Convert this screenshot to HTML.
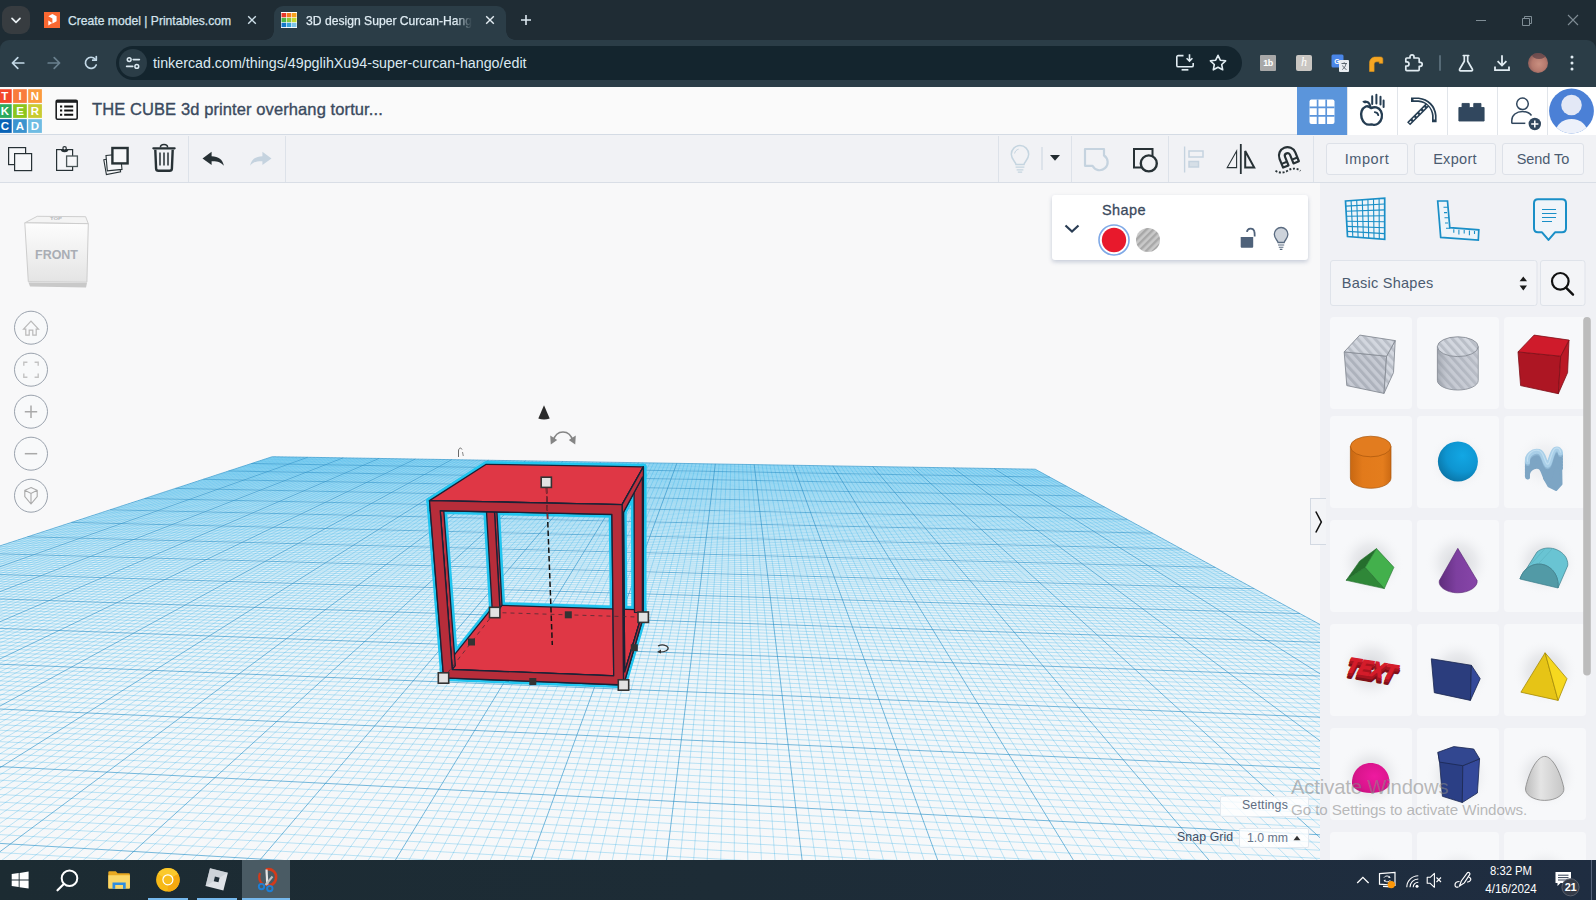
<!DOCTYPE html>
<html lang="en">
<head>
<meta charset="utf-8">
<title>3D design Super Curcan-Hango | Tinkercad</title>
<style>
*{box-sizing:border-box;margin:0;padding:0}
html,body{width:1596px;height:900px;overflow:hidden;background:#f7f8f9;font-family:"Liberation Sans",sans-serif;}
body{position:relative}
.abs{position:absolute}
svg{display:block;overflow:visible}
/* ---------- browser chrome ---------- */
#tabstrip{left:0;top:0;width:1596px;height:60px;background:#1f2c34}
#navbar{left:0;top:40px;width:1596px;height:47px;background:#2b3d47;border-top-left-radius:9px;border-top-right-radius:9px}
#tabsearch{left:2px;top:6px;width:28px;height:28px;border-radius:9px;background:#373c40}
.tabtitle{font-size:12.15px;color:#d3e3ec;white-space:nowrap;letter-spacing:0;-webkit-text-stroke:.25px #d3e3ec}
#tab1t{left:68px;top:13.5px}
#tab2{left:274px;top:6px;width:232px;height:34px;background:#2b3d47;border-radius:9px 9px 0 0}
#tab2:before,#tab2:after{content:"";position:absolute;bottom:0;width:9px;height:9px}
#tab2:before{left:-9px;background:radial-gradient(circle at 0 0,rgba(0,0,0,0) 8.5px,#2b3d47 9px)}
#tab2:after{right:-9px;background:radial-gradient(circle at 100% 0,rgba(0,0,0,0) 8.5px,#2b3d47 9px)}
#tab2t{left:306px;top:13.5px;width:166px;overflow:hidden;color:#e6f0f6;-webkit-mask-image:linear-gradient(90deg,#000 150px,transparent 166px);mask-image:linear-gradient(90deg,#000 150px,transparent 166px)}
#urlpill{left:116px;top:46px;width:1126px;height:34px;border-radius:17px;background:#14252e}
#urlchip{left:119px;top:49px;width:28px;height:28px;border-radius:14px;background:#2b3d47}
#url{left:153px;top:54.5px;font-size:14.28px;color:#dbe9f1;white-space:nowrap}
#url span{color:#dbe9f1}
/* ---------- tinkercad header ---------- */
#tkhead{left:0;top:87px;width:1596px;height:48px;background:#fafafa;border-bottom:1px solid #d4dbe4}
#tktitle{left:92px;top:99.8px;font-size:16.5px;color:#3b4a5e;white-space:nowrap;letter-spacing:.1px;-webkit-text-stroke:.35px #3b4a5e}
#tkbar{left:0;top:135px;width:1596px;height:48px;background:#f1f2f5;border-bottom:1px solid #d9dee6}
.vsep{width:1px;background:#dde2e9}
.btn{height:32px;top:143px;border:1px solid #dde1e8;border-radius:3px;background:#f4f5f8;color:#4b5b70;font-size:14.5px;text-align:center;line-height:30px;letter-spacing:.3px}
.hbtn{top:87px;width:50px;height:48px;border-left:1px solid #e1e5ea;background:#fff}
/* ---------- viewport ---------- */
#viewport{left:0;top:183px;width:1320px;height:677px;background:#f8f8f9;overflow:hidden}
#rightpanel{left:1320px;top:183px;width:276px;height:677px;background:#f0f1f5;overflow:hidden}
.card{width:82px;height:91px;background:#f7f8fa;border-radius:4px}
#shapebox{left:1052px;top:195px;width:256px;height:65px;background:#fff;border-radius:3px;box-shadow:0 2px 4px rgba(60,80,120,.25)}
.navc{left:17px;width:28px;height:28px;border:1px solid #b7b9bc;border-radius:50%;background:#f9f9fa}
/* ---------- taskbar ---------- */
#taskbar{left:0;top:860px;width:1596px;height:40px;background:linear-gradient(90deg,#1c2b32 0%,#1d2c36 45%,#1f2d41 100%)}
.tbtxt{color:#fff;font-size:12px;white-space:nowrap}
</style>
</head>
<body>
<!-- ================= BROWSER CHROME ================= -->
<div id="tabstrip" class="abs"></div>
<div id="navbar" class="abs"></div>
<div id="tabsearch" class="abs"><svg width="28" height="28" viewBox="0 0 28 28"><path d="M10 12.3l4 4 4-4" fill="none" stroke="#e8eef2" stroke-width="1.7" stroke-linecap="round" stroke-linejoin="round"/></svg></div>
<!-- tab 1 -->
<svg class="abs" style="left:44px;top:12px" width="16" height="16" viewBox="0 0 16 16"><rect width="16" height="16" fill="#fa6831"/><path d="M4.3 4.2L8.4 2l4.2 2.2v5L8.4 11.4V6.4z" fill="#fff"/><path d="M4.3 8.6v5l4-2.5z" fill="#fff"/></svg>
<div id="tab1t" class="abs tabtitle">Create model | Printables.com</div>
<svg class="abs" style="left:246px;top:14px" width="12" height="12" viewBox="0 0 12 12"><path d="M2.2 2.2l7.6 7.6M9.8 2.2l-7.6 7.6" stroke="#cfe0ea" stroke-width="1.4" fill="none"/></svg>
<!-- tab 2 (active) -->
<div id="tab2" class="abs"></div>
<svg class="abs" style="left:281px;top:12px" width="16" height="16" viewBox="0 0 16 16">
<rect x="0" y="0" width="16" height="16" fill="#fff"/>
<rect x="0.5" y="1" width="4.6" height="4.3" fill="#e8392c"/><rect x="5.7" y="1" width="4.6" height="4.3" fill="#f47b20"/><rect x="10.9" y="1" width="4.6" height="4.3" fill="#f9a11b"/>
<rect x="0.5" y="5.9" width="4.6" height="4.3" fill="#4cb648"/><rect x="5.7" y="5.9" width="4.6" height="4.3" fill="#8cc63f"/><rect x="10.9" y="5.9" width="4.6" height="4.3" fill="#c8d92c"/>
<rect x="0.5" y="10.8" width="4.6" height="4.3" fill="#1477c9"/><rect x="5.7" y="10.8" width="4.6" height="4.3" fill="#39a3dc"/><rect x="10.9" y="10.8" width="4.6" height="4.3" fill="#7dc4e8"/>
</svg>
<div id="tab2t" class="abs tabtitle">3D design Super Curcan-Hango | Tinkercad</div>
<svg class="abs" style="left:484px;top:14px" width="12" height="12" viewBox="0 0 12 12"><path d="M2.2 2.2l7.6 7.6M9.8 2.2l-7.6 7.6" stroke="#e3edf3" stroke-width="1.4" fill="none"/></svg>
<svg class="abs" style="left:519px;top:13px" width="14" height="14" viewBox="0 0 14 14"><path d="M7 2v10M2 7h10" stroke="#dce8ef" stroke-width="1.6" fill="none"/></svg>
<!-- window controls -->
<svg class="abs" style="left:1470px;top:10px" width="120" height="20" viewBox="0 0 120 20"><path d="M6 10.5h10" stroke="#7f8d95" stroke-width="1"/><path d="M52.5 8.5h7v7h-7zM54.5 8.5v-2h7v7h-2" fill="none" stroke="#7f8d95" stroke-width="1"/><path d="M98 5l10 10M108 5l-10 10" stroke="#7f8d95" stroke-width="1.1"/></svg>
<!-- nav buttons -->
<svg class="abs" style="left:8px;top:53px" width="100" height="20" viewBox="0 0 100 20">
<path d="M15.8 10H4.6M9.8 4.6L4.4 10l5.4 5.4" fill="none" stroke="#c3d9e7" stroke-width="1.7" stroke-linecap="round" stroke-linejoin="round"/>
<path d="M40.2 10h11.2M46.2 4.6l5.4 5.4-5.4 5.4" fill="none" stroke="#6a808e" stroke-width="1.7" stroke-linecap="round" stroke-linejoin="round"/>
<path d="M87.3 6.2A5.6 5.6 0 1 0 88.2 12" fill="none" stroke="#c3d9e7" stroke-width="1.7" stroke-linecap="round"/><path d="M88.3 3.6v3.6h-3.6" fill="none" stroke="#c3d9e7" stroke-width="1.7" stroke-linecap="round" stroke-linejoin="round"/>
</svg>
<!-- url pill -->
<div id="urlpill" class="abs"></div>
<div id="urlchip" class="abs"><svg width="28" height="28" viewBox="0 0 28 28"><circle cx="10.2" cy="10.6" r="1.9" fill="none" stroke="#dbe9f1" stroke-width="1.5"/><path d="M14.2 10.6h6.2" stroke="#dbe9f1" stroke-width="1.6" stroke-linecap="round"/><circle cx="17.8" cy="17.4" r="1.9" fill="none" stroke="#dbe9f1" stroke-width="1.5"/><path d="M7.6 17.4h6.2" stroke="#dbe9f1" stroke-width="1.6" stroke-linecap="round"/></svg></div>
<div id="url" class="abs">tinkercad.com<span>/things/49pglihXu94-super-curcan-hango/edit</span></div>
<!-- right side of url pill -->
<svg class="abs" style="left:1174px;top:52px" width="60" height="22" viewBox="0 0 60 22">
<path d="M9.5 3.6H4.2c-.8 0-1.4.6-1.400 1.400v8.400c0 .8.600 1.400 1.400 1.400h13.600c.8 0 1.400-.6 1.400-1.400V11" fill="none" stroke="#e1ecf2" stroke-width="1.6"/><path d="M7.6 17.8h6.800" stroke="#e1ecf2" stroke-width="1.7"/><path d="M15.500 2.300v6.600M12.600 6.200l2.900 2.900 2.900-2.900" fill="none" stroke="#e1ecf2" stroke-width="1.6"/>
<path d="M44 3.300l2.300 4.900 5.300.6-3.900 3.700 1 5.300-4.700-2.600-4.700 2.600 1-5.300-3.900-3.700 5.300-.6z" fill="none" stroke="#e1ecf2" stroke-width="1.6" stroke-linejoin="round"/>
</svg>
<!-- extensions -->
<div class="abs" style="left:1260px;top:55px;width:16px;height:16px;background:#a8a8a8;border-radius:1px;color:#fff;font-size:9px;font-weight:bold;line-height:16px;text-align:center;letter-spacing:-.5px">1b</div>
<div class="abs" style="left:1296px;top:55px;width:16px;height:16px;background:#c9c6c2;border-radius:2px;color:#fff;font-size:12px;font-style:italic;font-family:'Liberation Serif',serif;line-height:15px;text-align:center">h</div>
<svg class="abs" style="left:1331px;top:54px" width="19" height="19" viewBox="0 0 19 19"><rect x="0.5" y="0.5" width="12" height="13" rx="1.5" fill="#4a86e8"/><rect x="8" y="6" width="10" height="12" rx="1" fill="#e9edf2"/><path d="M10.500 9.500h5.500M13.200 8.300v1.200M11.300 15.500c2-1.500 3.400-3.500 3.700-6M11.600 11.500c.8 1.700 2 3 3.900 4" stroke="#5c6670" stroke-width="1" fill="none"/><text x="3.200" y="9.800" font-family="Liberation Sans, sans-serif" font-size="7" font-weight="bold" fill="#fff">G</text></svg>
<svg class="abs" style="left:1367px;top:54px" width="18" height="19" viewBox="0 0 18 19"><path d="M2.500 17.500V9.500c0-4 2.300-6.500 6-6.500h5c1.500 0 2.300.8 2.300 2.300v4h-3.600V7.800h-2.500c-1.700 0-2.600.9-2.600 2.600v7.100z" fill="#f5a623" stroke="#e2951a" stroke-width=".6"/></svg>
<svg class="abs" style="left:1402px;top:52px" width="22" height="22" viewBox="0 0 22 22"><path d="M8 4.800a2 2 0 0 1 4 0V6h4.200c.6 0 1 .4 1 1v3.300h1a2 2 0 0 1 0 4h-1V17.600c0 .6-.4 1-1 1H4.800c-.6 0-1-.4-1-1V14h1.100a2.100 2.100 0 0 0 0-4.200H3.800V7c0-.6.4-1 1-1H8z" fill="none" stroke="#e1ecf2" stroke-width="1.7" stroke-linejoin="round"/></svg>
<div class="abs" style="left:1439px;top:55px;width:2px;height:16px;background:#566a76;border-radius:1px"></div>
<svg class="abs" style="left:1455px;top:52px" width="22" height="22" viewBox="0 0 22 22"><path d="M8.300 3.500h5.400M9.300 3.700v5.500L4.600 17.300c-.4.800.1 1.500.9 1.500h11c.8 0 1.300-.7.900-1.500L12.700 9.200V3.700" fill="none" stroke="#e1ecf2" stroke-width="1.700" stroke-linejoin="round" stroke-linecap="round"/></svg>
<svg class="abs" style="left:1491px;top:52px" width="22" height="22" viewBox="0 0 22 22"><path d="M11 3.200v10M6.600 9.200l4.400 4.400 4.400-4.400" fill="none" stroke="#e1ecf2" stroke-width="1.800"/><path d="M4 14.500v3.700h14v-3.700" fill="none" stroke="#e1ecf2" stroke-width="1.800"/></svg>
<div class="abs" style="left:1528px;top:53px;width:20px;height:20px;border-radius:50%;background:radial-gradient(circle at 55% 55%,#c98f80 0,#b67a6e 45%,#8a5b58 75%,#6b4a52 100%);overflow:hidden"><div class="abs" style="left:4px;top:-3px;width:14px;height:9px;border-radius:50%;background:#5a4046;opacity:.7"></div></div>
<svg class="abs" style="left:1568px;top:53px" width="8" height="20" viewBox="0 0 8 20"><circle cx="4" cy="4" r="1.500" fill="#e1ecf2"/><circle cx="4" cy="10" r="1.500" fill="#e1ecf2"/><circle cx="4" cy="16" r="1.500" fill="#e1ecf2"/></svg>
<!-- ================= TINKERCAD HEADER ================= -->
<div id="tkhead" class="abs"></div>
<svg class="abs" style="left:0;top:87px" width="44" height="48" viewBox="0 0 44 48" font-family="Liberation Sans, sans-serif" font-weight="bold" font-size="11.500" fill="#fff" text-anchor="middle">
<rect x="-2" y="2.200" width="13.700" height="13.700" fill="#f4472a"/><rect x="13.100" y="2.200" width="13.700" height="13.700" fill="#f97c3c"/><rect x="28.200" y="2.200" width="13.700" height="13.700" fill="#fb9a3d"/>
<rect x="-2" y="17.200" width="13.700" height="13.700" fill="#2daa5d"/><rect x="13.100" y="17.200" width="13.700" height="13.700" fill="#8cc51d"/><rect x="28.200" y="17.200" width="13.700" height="13.700" fill="#c9cb32"/>
<rect x="-2" y="32.200" width="13.700" height="13.700" fill="#0a63b6"/><rect x="13.100" y="32.200" width="13.700" height="13.700" fill="#3b93cf"/><rect x="28.200" y="32.200" width="13.700" height="13.700" fill="#6fbce3"/>
<text x="4.800" y="13.300">T</text><text x="20" y="13.300">I</text><text x="35" y="13.300">N</text>
<text x="4.800" y="28.300">K</text><text x="20" y="28.300">E</text><text x="35" y="28.300">R</text>
<text x="4.800" y="43.300">C</text><text x="20" y="43.300">A</text><text x="35" y="43.300">D</text>
</svg>
<svg class="abs" style="left:54px;top:98px" width="26" height="24" viewBox="0 0 26 24"><rect x="2.200" y="2.400" width="21" height="18.800" rx="1.200" fill="#fdfdfd" stroke="#1d1f21" stroke-width="1.600"/><path d="M2.200 3.600h21" stroke="#1d1f21" stroke-width="2.400"/><path d="M6 8.400h2.200M10.200 8.400h9M6 12.600h2.200M10.200 12.600h9M6 16.800h2.200M10.200 16.800h9" stroke="#111" stroke-width="2"/></svg>
<div id="tktitle" class="abs">THE CUBE 3d printer overhang tortur...</div>
<!-- header buttons right -->
<div class="abs" style="left:1297px;top:87px;width:49.500px;height:48px;background:#5b95db"></div>
<svg class="abs" style="left:1308px;top:98px" width="28" height="28" viewBox="0 0 28 28"><rect x="1.500" y="1.500" width="25" height="24.500" rx="2" fill="#fff"/><path d="M9.600 1.500v24.500M18.200 1.500v24.500M1.500 9.400h25M1.500 17.800h25" stroke="#5b95db" stroke-width="1.700"/></svg>
<div class="abs hbtn" style="left:1347px"></div><div class="abs hbtn" style="left:1397px"></div><div class="abs hbtn" style="left:1447px"></div><div class="abs hbtn" style="left:1497px"></div><div class="abs hbtn" style="left:1547px;width:49px"></div>
<!-- sim lab apple+hand -->
<svg class="abs" style="left:1356px;top:93px" width="34" height="36" viewBox="0 0 34 36"><path d="M9.800 13.500c-4 1.800-5.700 6.600-4.200 11.300 1.400 4.400 4.700 7.300 8.200 6.800 1.200-.2 2-.2 3.200.1 3.700.8 7.600-2.100 8.700-6.800 1.100-4.800-1.200-9.400-5.300-10.500-2-.5-3.800-.1-5.300.700-1.600-1.500-3.500-2.300-5.300-1.600z" fill="none" stroke="#253d52" stroke-width="2.400" stroke-linejoin="round"/><path d="M14.500 14.200c-.3-2.200-1.400-4.300-3.500-5.500" fill="none" stroke="#253d52" stroke-width="2"/><path d="M6.300 8.500c2.200-1.700 4.700-1.300 6 .8-2.300 1.500-4.800 1.300-6-.8z" fill="#253d52"/><path d="M16.200 11V3.200M20.400 10.500V1.800M24.500 11.500V3.800M27.600 14V7.500" stroke="#253d52" stroke-width="2" stroke-linecap="round"/><path d="M18.800 19.200c1.800.2 3.100 1.300 3.500 3" fill="none" stroke="#253d52" stroke-width="1.800" stroke-linecap="round"/></svg>
<!-- pickaxe -->
<svg class="abs" style="left:1404px;top:94px" width="36" height="34" viewBox="0 0 36 34"><path d="M4.600 29.800L25.500 8.900" stroke="#253d52" stroke-width="4.400"/><path d="M5.500 28.900L24.500 9.900" stroke="#fff" stroke-width="1.300" stroke-dasharray="2.400 2.400"/><path d="M7 5.800h7.500C23.500 6.800 29.300 12.500 30.300 21.500v6.800" fill="none" stroke="#253d52" stroke-width="4.600" stroke-linejoin="round"/><path d="M9.500 5.700h5C23 6.800 29.200 12.800 30.300 21.500v4" fill="none" stroke="#fff" stroke-width="1.200"/></svg>
<!-- brick -->
<svg class="abs" style="left:1458px;top:101.500px" width="27" height="20" viewBox="0 0 30 22"><path d="M1 6h3.500V1.500h8V6h5V1.500h8V6H29v15H1z" fill="#31475e" stroke="#31475e" stroke-width="1" stroke-linejoin="round"/></svg>
<!-- add user -->
<svg class="abs" style="left:1508px;top:94px" width="36" height="40" viewBox="0 0 36 40"><circle cx="14.500" cy="9.800" r="5.800" fill="none" stroke="#31475e" stroke-width="1.500"/><path d="M3.800 29.500v-3.200c0-5 4.600-8.800 10.700-8.800 4 0 7.200 1.600 9 4" fill="none" stroke="#31475e" stroke-width="1.500"/><path d="M3.800 29.300h13.500" stroke="#31475e" stroke-width="1.500"/><circle cx="26.800" cy="30" r="6.200" fill="#31475e"/><path d="M26.800 26.400v7.200M23.200 30h7.200" stroke="#fff" stroke-width="1.500"/></svg>
<!-- avatar -->
<svg class="abs" style="left:1548px;top:87px" width="48" height="48" viewBox="0 0 48 48"><defs><clipPath id="avc"><circle cx="23.500" cy="24" r="22.400"/></clipPath></defs><circle cx="23.500" cy="24" r="22.400" fill="#4b80d6"/><g clip-path="url(#avc)"><circle cx="23.500" cy="18" r="10.300" fill="#e3e8f6"/><ellipse cx="23.500" cy="46" rx="16" ry="14" fill="#edf1fa"/></g></svg>
<!-- ================= TINKERCAD TOOLBAR ================= -->
<div id="tkbar" class="abs"></div>
<!-- copy -->
<svg class="abs" style="left:6px;top:145px" width="28" height="28" viewBox="0 0 28 28"><rect x="2.600" y="2.600" width="17" height="17" fill="#f6f7f9" stroke="#273135" stroke-width="1.200"/><rect x="8.600" y="8.600" width="17" height="17" fill="#f6f7f9" stroke="#273135" stroke-width="1.200"/></svg>
<!-- paste -->
<svg class="abs" style="left:54px;top:144px" width="26" height="30" viewBox="0 0 26 30"><rect x="2.600" y="5.600" width="16" height="20.800" fill="#f6f7f9" stroke="#273135" stroke-width="1.200"/><path d="M6.800 5.600c0 1.600 1.200 2.600 3.800 2.600s3.800-1 3.800-2.600z" fill="#273135"/><circle cx="10.600" cy="4.300" r="1.700" fill="#f6f7f9" stroke="#273135" stroke-width="1.200"/><rect x="12.600" y="12" width="10.800" height="10.500" fill="#f6f7f9" stroke="#4b5658" stroke-width="1.300"/></svg>
<!-- duplicate -->
<svg class="abs" style="left:100px;top:144px" width="32" height="32" viewBox="0 0 32 32"><path d="M3.800 15.800l14-2.600 2.800 14.600-14.200 2.700z" fill="#f6f7f9" stroke="#273135" stroke-width="1.100"/><path d="M6 11.500l14.500-1.300 1.500 15.200-14.700 1.400z" fill="#f6f7f9" stroke="#273135" stroke-width="1.100"/><rect x="12.400" y="4" width="15.200" height="15.400" fill="#f6f7f9" stroke="#273135" stroke-width="2.400"/></svg>
<!-- trash -->
<svg class="abs" style="left:150px;top:142px" width="28" height="32" viewBox="0 0 28 32"><path d="M3.400 6.300h21.200" stroke="#273135" stroke-width="2.300" stroke-linecap="round"/><path d="M10.400 5.600c0-2 1.300-3 3.600-3s3.600 1 3.600 3" fill="none" stroke="#273135" stroke-width="1.500"/><path d="M5.300 7.800l.8 18.800c.1 1.400 1 2.200 2.300 2.200h11.200c1.300 0 2.200-.8 2.300-2.200l.8-18.800" fill="none" stroke="#273135" stroke-width="2.400"/><path d="M10 10.500v13M14 10.500v13M18 10.500v13" stroke="#273135" stroke-width="1.500"/></svg>
<div class="abs vsep" style="left:188px;top:136px;height:46px"></div>
<!-- undo -->
<svg class="abs" style="left:200px;top:148px" width="28" height="22" viewBox="0 0 28 22"><path d="M2.500 10.400L11.600 3.800v4.400c6.800.3 11.300 3.300 12.300 9.600-2.800-3.700-6.600-4.800-12.300-4.600V17z" fill="#273135"/></svg>
<!-- redo -->
<svg class="abs" style="left:246px;top:148px" width="28" height="22" viewBox="0 0 28 22"><path d="M25.500 10.400L16.400 3.800v4.400C9.600 8.500 5.100 11.500 4.100 17.800c2.800-3.700 6.600-4.800 12.300-4.600V17z" fill="#c5d3df"/></svg>
<div class="abs vsep" style="left:285px;top:136px;height:46px"></div>
<!-- right tool cluster -->
<div class="abs vsep" style="left:998px;top:136px;height:46px"></div>
<svg class="abs" style="left:1008px;top:144px" width="24" height="30" viewBox="0 0 24 30"><path d="M8 20.600c-.3-2.600-4.700-5.300-4.700-10.300a8.700 8.700 0 0 1 17.400 0c0 5-4.400 7.700-4.700 10.300z" fill="none" stroke="#c5d5e0" stroke-width="1.500"/><path d="M7.600 23.200h8.800M8.600 25.800h6.800M9.800 28.200h4.400" stroke="#c5d5e0" stroke-width="1.300"/><path d="M6.600 9.500c.4-2.300 1.900-3.800 4-4.300" fill="none" stroke="#c5d5e0" stroke-width="1"/></svg>
<div class="abs" style="left:1041px;top:147px;width:2px;height:23px;background:#dde3ea"></div>
<svg class="abs" style="left:1049px;top:154px" width="12" height="8" viewBox="0 0 12 8"><path d="M1 1h10L6 6.800z" fill="#222b30"/></svg>
<div class="abs vsep" style="left:1071px;top:136px;height:46px"></div>
<!-- group (disabled) -->
<svg class="abs" style="left:1082px;top:146px" width="30" height="28" viewBox="0 0 30 28"><path d="M3 3h19v6.500a8 8 0 1 1-11.500 10.300H3z" fill="none" stroke="#c5d3df" stroke-width="2.200" stroke-linejoin="round"/></svg>
<!-- ungroup -->
<svg class="abs" style="left:1131px;top:146px" width="30" height="28" viewBox="0 0 30 28"><rect x="3" y="3" width="18.500" height="18.500" fill="none" stroke="#273135" stroke-width="2"/><circle cx="17.800" cy="17.400" r="8" fill="#f1f2f5" stroke="#273135" stroke-width="2.400"/></svg>
<div class="abs vsep" style="left:1168px;top:136px;height:46px"></div>
<!-- align (disabled) -->
<svg class="abs" style="left:1182px;top:145px" width="24" height="28" viewBox="0 0 24 28"><path d="M2.600 1.500v26" stroke="#c5d3df" stroke-width="1.400"/><rect x="7" y="6" width="14" height="6" fill="none" stroke="#c5d3df" stroke-width="1.500"/><rect x="7" y="16.500" width="9.500" height="5.500" fill="#d6dfe7" stroke="#c5d3df" stroke-width="1.500"/></svg>
<!-- mirror -->
<svg class="abs" style="left:1224px;top:143px" width="34" height="32" viewBox="0 0 34 32"><path d="M16.800 1v30" stroke="#273135" stroke-width="1.800"/><path d="M12.600 8v16.600H3.200z" fill="none" stroke="#273135" stroke-width="1.100"/><path d="M21.200 8v16.600h9z" fill="none" stroke="#273135" stroke-width="2"/></svg>
<!-- magnet -->
<svg class="abs" style="left:1273px;top:143px" width="32" height="32" viewBox="0 0 32 32"><g transform="rotate(-22 15 14)"><path d="M6.500 22V12.500a8.500 8.500 0 0 1 17 0V22h-5.800V12.800a2.700 2.700 0 0 0-5.400 0V22z" fill="none" stroke="#273135" stroke-width="2.200" stroke-linejoin="round"/><path d="M6.500 18h5.800M17.700 18h5.800" stroke="#273135" stroke-width="2"/></g><path d="M2.500 27.800c4 2.600 8.500 2.200 12.500-.3s8.500-2.600 12.500.3" fill="none" stroke="#273135" stroke-width="1.900" stroke-dasharray="2 1.700"/></svg>
<div class="abs vsep" style="left:1313px;top:136px;height:46px"></div>
<div class="abs btn" style="left:1326px;width:82px;letter-spacing:.6px">Import</div>
<div class="abs btn" style="left:1414px;width:82px">Export</div>
<div class="abs btn" style="left:1502px;width:82px;letter-spacing:-.05px">Send To</div>
<!-- ================= 3D VIEWPORT ================= -->
<div id="viewport" class="abs">
<svg class="abs" style="left:0;top:0" width="1320" height="677" viewBox="0 0 1320 677">
<defs>
<linearGradient id="pg" gradientUnits="userSpaceOnUse" x1="0" y1="274" x2="0" y2="677">
<stop offset="0" stop-color="#8ad8f6" stop-opacity=".5"/><stop offset=".12" stop-color="#9eddf6" stop-opacity=".42"/><stop offset=".35" stop-color="#b4e2f6" stop-opacity=".32"/><stop offset=".7" stop-color="#d5eef9" stop-opacity=".16"/><stop offset="1" stop-color="#eef8fc" stop-opacity=".1"/>
</linearGradient>
</defs>
<polygon points="272.3,273.7 1035.2,286.2 5505.9,2726.1 -2695.8,1245.3" fill="url(#pg)"/>
<path d="M275.8 273.7 L-5.0 366.4M279.4 273.8 L-5.0 368.4M282.9 273.9 L-5.0 370.4M286.4 273.9 L-5.0 372.5M290.0 274.0 L-5.0 374.5M293.5 274.0 L-5.0 376.7M297.0 274.1 L-5.0 378.8M300.6 274.1 L-5.0 381.0M304.1 274.2 L-5.0 383.2M311.2 274.3 L-5.0 387.8M314.8 274.4 L-5.0 390.2M318.3 274.4 L-5.0 392.6M321.9 274.5 L-5.0 395.0M325.4 274.5 L-5.0 397.5M329.0 274.6 L-5.0 400.0M332.6 274.7 L-5.0 402.6M336.1 274.7 L-5.0 405.2M339.7 274.8 L-5.0 407.8M346.9 274.9 L-5.0 413.3M350.5 275.0 L-5.0 416.2M354.0 275.0 L-5.0 419.0M357.6 275.1 L-5.0 422.0M361.2 275.1 L-5.0 425.0M364.8 275.2 L-5.0 428.0M368.4 275.2 L-5.0 431.1M372.0 275.3 L-5.0 434.3M375.6 275.4 L-5.0 437.6M382.8 275.5 L-5.0 444.3M386.4 275.5 L-5.0 447.7M390.0 275.6 L-5.0 451.3M393.6 275.7 L-5.0 454.9M397.3 275.7 L-5.0 458.6M400.9 275.8 L-5.0 462.3M404.5 275.8 L-5.0 466.2M408.1 275.9 L-5.0 470.2M411.8 276.0 L-5.0 474.2M419.0 276.1 L-5.0 482.6M422.7 276.1 L-5.0 486.9M426.3 276.2 L-5.0 491.4M429.9 276.3 L-5.0 495.9M433.6 276.3 L-5.0 500.6M437.2 276.4 L-5.0 505.4M440.9 276.4 L-5.0 510.3M444.5 276.5 L-5.0 515.3M448.2 276.6 L-5.0 520.5M455.5 276.7 L-5.0 531.2M459.2 276.7 L-5.0 536.8M462.8 276.8 L-5.0 542.6M466.5 276.9 L-5.0 548.5M470.2 276.9 L-5.0 554.6M473.9 277.0 L-5.0 560.8M477.5 277.0 L-5.0 567.3M481.2 277.1 L-5.0 573.9M484.9 277.2 L-5.0 580.8M492.3 277.3 L-5.0 595.1M496.0 277.3 L-5.0 602.6M499.7 277.4 L-5.0 610.3M503.4 277.5 L-5.0 618.3M507.1 277.5 L-5.0 626.6M510.8 277.6 L-5.0 635.1M514.5 277.6 L-5.0 643.9M518.2 277.7 L-5.0 653.1M521.9 277.8 L-5.0 662.6M529.4 277.9 L-5.0 682.5M533.1 277.9 L2.9 687.0M536.8 278.0 L16.7 687.0M540.5 278.1 L30.5 687.0M544.3 278.1 L44.3 687.0M548.0 278.2 L58.1 687.0M551.7 278.2 L71.9 687.0M555.5 278.3 L85.7 687.0M559.2 278.4 L99.5 687.0M566.7 278.5 L127.1 687.0M570.5 278.6 L140.9 687.0M574.2 278.6 L154.7 687.0M578.0 278.7 L168.5 687.0M581.8 278.7 L182.3 687.0M585.5 278.8 L196.1 687.0M589.3 278.9 L209.9 687.0M593.1 278.9 L223.7 687.0M596.8 279.0 L237.5 687.0M604.4 279.1 L265.1 687.0M608.2 279.2 L278.9 687.0M612.0 279.2 L292.7 687.0M615.7 279.3 L306.5 687.0M619.5 279.4 L320.3 687.0M623.3 279.4 L334.1 687.0M627.1 279.5 L347.9 687.0M630.9 279.5 L361.7 687.0M634.7 279.6 L375.5 687.0M642.4 279.7 L403.1 687.0M646.2 279.8 L416.9 687.0M650.0 279.9 L430.7 687.0M653.8 279.9 L444.5 687.0M657.6 280.0 L458.3 687.0M661.4 280.0 L472.1 687.0M665.3 280.1 L485.9 687.0M669.1 280.2 L499.7 687.0M672.9 280.2 L513.5 687.0M680.6 280.4 L541.1 687.0M684.5 280.4 L554.9 687.0M688.3 280.5 L568.7 687.0M692.2 280.5 L582.5 687.0M696.0 280.6 L596.3 687.0M699.9 280.7 L610.1 687.0M703.7 280.7 L623.9 687.0M707.6 280.8 L637.7 687.0M711.5 280.9 L651.5 687.0M719.2 281.0 L679.1 687.0M723.1 281.0 L692.9 687.0M726.9 281.1 L706.7 687.0M730.8 281.2 L720.5 687.0M734.7 281.2 L734.3 687.0M738.6 281.3 L748.1 687.0M742.5 281.4 L761.9 687.0M746.4 281.4 L775.7 687.0M750.3 281.5 L789.5 687.0M758.1 281.6 L817.1 687.0M762.0 281.7 L830.9 687.0M765.9 281.7 L844.7 687.0M769.8 281.8 L858.5 687.0M773.7 281.9 L872.3 687.0M777.6 281.9 L886.1 687.0M781.6 282.0 L899.9 687.0M785.5 282.1 L913.7 687.0M789.4 282.1 L927.5 687.0M797.3 282.3 L955.1 687.0M801.2 282.3 L968.9 687.0M805.2 282.4 L982.7 687.0M809.1 282.5 L996.5 687.0M813.1 282.5 L1010.3 687.0M817.0 282.6 L1024.1 687.0M821.0 282.6 L1037.9 687.0M824.9 282.7 L1051.8 687.0M828.9 282.8 L1065.6 687.0M836.8 282.9 L1093.2 687.0M840.8 283.0 L1107.0 687.0M844.7 283.0 L1120.8 687.0M848.7 283.1 L1134.6 687.0M852.7 283.2 L1148.4 687.0M856.7 283.2 L1162.2 687.0M860.7 283.3 L1176.0 687.0M864.7 283.4 L1189.8 687.0M868.7 283.4 L1203.6 687.0M876.6 283.6 L1231.2 687.0M880.6 283.6 L1245.0 687.0M884.7 283.7 L1258.8 687.0M888.7 283.8 L1272.6 687.0M892.7 283.8 L1286.4 687.0M896.7 283.9 L1300.2 687.0M900.7 284.0 L1314.0 687.0M904.7 284.0 L1327.8 687.0M908.8 284.1 L1330.0 676.2M916.8 284.2 L1330.0 652.0M920.9 284.3 L1330.0 640.8M924.9 284.3 L1330.0 629.9M928.9 284.4 L1330.0 619.6M933.0 284.5 L1330.0 609.6M937.0 284.5 L1330.0 600.1M941.1 284.6 L1330.0 590.9M945.1 284.7 L1330.0 582.0M949.2 284.7 L1330.0 573.5M957.3 284.9 L1330.0 557.4M961.4 284.9 L1330.0 549.7M965.5 285.0 L1330.0 542.3M969.5 285.1 L1330.0 535.2M973.6 285.1 L1330.0 528.3M977.7 285.2 L1330.0 521.7M981.8 285.3 L1330.0 515.2M985.9 285.3 L1330.0 509.0M990.0 285.4 L1330.0 502.9M998.2 285.5 L1330.0 491.4M1002.3 285.6 L1330.0 485.9M1006.4 285.7 L1330.0 480.5M1010.5 285.7 L1330.0 475.3M1014.6 285.8 L1330.0 470.3M1018.7 285.9 L1330.0 465.4M1022.8 286.0 L1330.0 460.6M1026.9 286.0 L1330.0 455.9M1031.1 286.1 L1330.0 451.4M270.3 274.3 L1036.6 286.9M268.3 275.0 L1038.0 287.7M266.2 275.7 L1039.5 288.5M264.2 276.3 L1040.9 289.3M262.1 277.0 L1042.4 290.1M260.0 277.7 L1043.9 290.9M257.9 278.4 L1045.4 291.7M255.7 279.1 L1046.9 292.5M253.6 279.8 L1048.4 293.4M249.2 281.2 L1051.5 295.1M247.0 282.0 L1053.1 295.9M244.8 282.7 L1054.7 296.8M242.5 283.4 L1056.3 297.7M240.2 284.2 L1057.9 298.5M237.9 284.9 L1059.5 299.4M235.6 285.7 L1061.2 300.3M233.3 286.5 L1062.9 301.2M230.9 287.2 L1064.5 302.2M226.1 288.8 L1068.0 304.0M223.7 289.6 L1069.7 305.0M221.2 290.4 L1071.5 305.9M218.7 291.2 L1073.2 306.9M216.2 292.0 L1075.0 307.9M213.7 292.9 L1076.9 308.9M211.1 293.7 L1078.7 309.9M208.6 294.5 L1080.5 310.9M206.0 295.4 L1082.4 311.9M200.7 297.1 L1086.2 314.0M198.0 298.0 L1088.2 315.1M195.3 298.9 L1090.1 316.1M192.5 299.8 L1092.1 317.2M189.8 300.7 L1094.1 318.3M187.0 301.6 L1096.1 319.4M184.2 302.5 L1098.2 320.5M181.3 303.5 L1100.3 321.7M178.4 304.4 L1102.3 322.8M172.6 306.3 L1106.6 325.1M169.6 307.3 L1108.8 326.3M166.6 308.3 L1111.0 327.5M163.6 309.3 L1113.2 328.7M160.5 310.3 L1115.4 329.9M157.4 311.3 L1117.7 331.2M154.3 312.3 L1120.0 332.4M151.1 313.4 L1122.3 333.7M147.9 314.4 L1124.7 335.0M141.4 316.5 L1129.5 337.6M138.1 317.6 L1131.9 338.9M134.7 318.7 L1134.4 340.3M131.3 319.8 L1136.9 341.7M127.9 321.0 L1139.5 343.1M124.4 322.1 L1142.0 344.5M120.9 323.2 L1144.6 345.9M117.4 324.4 L1147.3 347.3M113.8 325.6 L1149.9 348.8M106.5 328.0 L1155.4 351.7M102.8 329.2 L1158.2 353.3M99.0 330.4 L1161.0 354.8M95.2 331.7 L1163.8 356.3M91.4 332.9 L1166.7 357.9M87.5 334.2 L1169.6 359.5M83.5 335.5 L1172.6 361.1M79.5 336.8 L1175.6 362.8M75.5 338.1 L1178.7 364.5M67.3 340.8 L1184.9 367.9M63.1 342.2 L1188.1 369.6M58.8 343.6 L1191.3 371.4M54.5 345.0 L1194.6 373.1M50.2 346.4 L1197.9 375.0M45.8 347.8 L1201.3 376.8M41.3 349.3 L1204.7 378.7M36.8 350.8 L1208.2 380.5M32.2 352.3 L1211.7 382.5M22.8 355.4 L1218.9 386.4M18.0 356.9 L1222.6 388.4M13.2 358.5 L1226.3 390.5M8.3 360.1 L1230.1 392.5M3.3 361.7 L1234.0 394.6M-1.7 363.4 L1237.9 396.8M-5.0 365.1 L1241.9 398.9M-5.0 366.9 L1245.9 401.1M-5.0 368.8 L1250.0 403.4M-5.0 372.6 L1258.4 408.0M-5.0 374.6 L1262.7 410.3M-5.0 376.6 L1267.1 412.7M-5.0 378.6 L1271.6 415.2M-5.0 380.6 L1276.1 417.6M-5.0 382.7 L1280.7 420.1M-5.0 384.8 L1285.4 422.7M-5.0 387.0 L1290.2 425.3M-5.0 389.2 L1295.0 427.9M-5.0 393.6 L1305.0 433.4M-5.0 395.9 L1310.1 436.2M-5.0 398.3 L1315.3 439.0M-5.0 400.7 L1320.6 441.9M-5.0 403.1 L1326.0 444.9M-5.0 405.5 L1330.0 447.8M-5.0 408.0 L1330.0 450.7M-5.0 410.6 L1330.0 453.6M-5.0 413.2 L1330.0 456.6M-5.0 418.5 L1330.0 462.7M-5.0 421.3 L1330.0 465.9M-5.0 424.1 L1330.0 469.1M-5.0 426.9 L1330.0 472.4M-5.0 429.8 L1330.0 475.7M-5.0 432.7 L1330.0 479.1M-5.0 435.8 L1330.0 482.6M-5.0 438.8 L1330.0 486.1M-5.0 442.0 L1330.0 489.7M-5.0 448.4 L1330.0 497.1M-5.0 451.7 L1330.0 500.9M-5.0 455.1 L1330.0 504.8M-5.0 458.6 L1330.0 508.8M-5.0 462.1 L1330.0 512.9M-5.0 465.7 L1330.0 517.0M-5.0 469.4 L1330.0 521.3M-5.0 473.2 L1330.0 525.6M-5.0 477.1 L1330.0 530.1M-5.0 485.0 L1330.0 539.2M-5.0 489.1 L1330.0 543.9M-5.0 493.3 L1330.0 548.8M-5.0 497.7 L1330.0 553.7M-5.0 502.1 L1330.0 558.8M-5.0 506.6 L1330.0 564.0M-5.0 511.2 L1330.0 569.3M-5.0 515.9 L1330.0 574.8M-5.0 520.8 L1330.0 580.4M-5.0 530.9 L1330.0 591.9M-5.0 536.1 L1330.0 598.0M-5.0 541.5 L1330.0 604.1M-5.0 547.0 L1330.0 610.5M-5.0 552.6 L1330.0 617.0M-5.0 558.4 L1330.0 623.7M-5.0 564.4 L1330.0 630.5M-5.0 570.5 L1330.0 637.6M-5.0 576.9 L1330.0 644.8M-5.0 590.0 L1330.0 659.9M-5.0 596.9 L1330.0 667.8M-5.0 604.0 L1330.0 676.0M-5.0 611.2 L1330.0 684.4M-5.0 618.8 L1222.1 687.0M-5.0 626.5 L1066.0 687.0M-5.0 634.5 L910.0 687.0M-5.0 642.7 L754.0 687.0M-5.0 651.3 L598.0 687.0M-5.0 669.2 L286.0 687.0M-5.0 678.6 L130.0 687.0" fill="none" stroke="#2cace6" stroke-opacity=".33" stroke-width=".9"/>
<path d="M272.3 273.7 L-5.0 364.5M307.7 274.3 L-5.0 385.5M343.3 274.8 L-5.0 410.6M379.2 275.4 L-5.0 440.9M415.4 276.0 L-5.0 478.3M451.8 276.6 L-5.0 525.8M488.6 277.2 L-5.0 587.8M525.6 277.8 L-5.0 672.4M563.0 278.4 L113.3 687.0M600.6 279.0 L251.3 687.0M638.5 279.7 L389.3 687.0M676.8 280.3 L527.3 687.0M715.3 280.9 L665.3 687.0M754.2 281.6 L803.3 687.0M793.3 282.2 L941.3 687.0M832.8 282.8 L1079.4 687.0M872.6 283.5 L1217.4 687.0M912.8 284.2 L1330.0 663.8M953.3 284.8 L1330.0 565.3M994.1 285.5 L1330.0 497.1M1035.2 286.2 L1330.0 447.0M272.3 273.7 L1035.2 286.2M251.4 280.5 L1050.0 294.2M228.5 288.0 L1066.3 303.1M203.3 296.3 L1084.3 313.0M175.5 305.4 L1104.5 324.0M144.7 315.5 L1127.1 336.3M110.2 326.8 L1152.6 350.2M71.4 339.4 L1181.8 366.1M27.5 353.8 L1215.3 384.4M-5.0 370.7 L1254.2 405.7M-5.0 391.4 L1300.0 430.6M-5.0 415.8 L1330.0 459.7M-5.0 445.2 L1330.0 493.4M-5.0 481.0 L1330.0 534.6M-5.0 525.8 L1330.0 586.1M-5.0 583.3 L1330.0 652.3M-5.0 660.1 L442.0 687.0" fill="none" stroke="#258fc8" stroke-opacity=".62" stroke-width="1"/>
<!-- cube -->
<g fill="#22c5ef" stroke="#22c5ef" stroke-width="6.4" stroke-linejoin="round">
<polygon points="494.3,422.1 643.3,426.8 623.4,493.2 442.9,486.2"/>
<polygon points="643.3,434.3 623.5,502.0 623.4,493.2 643.3,426.8"/>
<polygon points="443.6,494.9 623.5,502.0 623.4,493.2 442.9,486.2"/>
<polygon points="486.7,289.5 494.8,289.6 492.4,291.3 484.3,291.1"/>
<polygon points="502.0,422.3 499.9,425.1 492.4,291.3 494.8,289.6"/>
<polygon points="492.1,424.9 499.9,425.1 492.4,291.3 484.3,291.1"/>
<polygon points="635.0,292.1 643.4,292.3 642.5,294.0 634.0,293.8"/>
<polygon points="643.3,426.8 642.5,429.7 642.5,294.0 643.4,292.3"/>
<polygon points="634.5,429.4 642.5,429.7 642.5,294.0 634.0,293.8"/>
<polygon points="433.9,325.1 443.6,325.3 440.2,327.7 430.3,327.5"/>
<polygon points="455.3,482.5 452.2,486.5 440.2,327.7 443.6,325.3"/>
<polygon points="442.9,486.2 452.2,486.5 440.2,327.7 430.3,327.5"/>
<polygon points="613.3,329.0 623.5,329.2 622.1,331.7 611.9,331.5"/>
<polygon points="624.7,489.0 623.4,493.2 622.1,331.7 623.5,329.2"/>
<polygon points="613.7,492.8 623.4,493.2 622.1,331.7 611.9,331.5"/>
<polygon points="486.2,281.3 643.4,283.9 622.1,321.6 429.5,317.6"/>
<polygon points="643.4,292.3 622.1,331.7 622.1,321.6 643.4,283.9"/>
<polygon points="430.3,327.5 622.1,331.7 622.1,321.6 429.5,317.6"/>
</g>
<g stroke="#1a2236" stroke-width="1.3" stroke-linejoin="round">
<polygon points="494.3,422.1 643.3,426.8 623.4,493.2 442.9,486.2" fill="#df3745"/>
<polygon points="643.3,434.3 623.5,502.0 623.4,493.2 643.3,426.8" fill="#bf303d"/>
<polygon points="443.6,494.9 623.5,502.0 623.4,493.2 442.9,486.2" fill="#b72d3a"/>
<polygon points="486.7,289.5 494.8,289.6 492.4,291.3 484.3,291.1" fill="#df3745"/>
<polygon points="502.0,422.3 499.9,425.1 492.4,291.3 494.8,289.6" fill="#bf303d"/>
<polygon points="492.1,424.9 499.9,425.1 492.4,291.3 484.3,291.1" fill="#b72d3a"/>
<polygon points="635.0,292.1 643.4,292.3 642.5,294.0 634.0,293.8" fill="#df3745"/>
<polygon points="643.3,426.8 642.5,429.7 642.5,294.0 643.4,292.3" fill="#bf303d"/>
<polygon points="634.5,429.4 642.5,429.7 642.5,294.0 634.0,293.8" fill="#b72d3a"/>
<polygon points="433.9,325.1 443.6,325.3 440.2,327.7 430.3,327.5" fill="#df3745"/>
<polygon points="455.3,482.5 452.2,486.5 440.2,327.7 443.6,325.3" fill="#bf303d"/>
<polygon points="442.9,486.2 452.2,486.5 440.2,327.7 430.3,327.5" fill="#b72d3a"/>
<polygon points="613.3,329.0 623.5,329.2 622.1,331.7 611.9,331.5" fill="#df3745"/>
<polygon points="624.7,489.0 623.4,493.2 622.1,331.7 623.5,329.2" fill="#bf303d"/>
<polygon points="613.7,492.8 623.4,493.2 622.1,331.7 611.9,331.5" fill="#b72d3a"/>
<polygon points="486.2,281.3 643.4,283.9 622.1,321.6 429.5,317.6" fill="#df3745"/>
<polygon points="643.4,292.3 622.1,331.7 622.1,321.6 643.4,283.9" fill="#bf303d"/>
<polygon points="430.3,327.5 622.1,331.7 622.1,321.6 429.5,317.6" fill="#b72d3a"/>
<path d="M643.3 434.3 L623.5 502.0 L622.1 321.6 L643.4 283.9Z M642.5 429.7 L624.7 489.0 L623.5 329.2 L642.5 294.0Z" fill="#bf303d" fill-rule="evenodd"/>
<path d="M443.6 494.9 L623.5 502.0 L622.1 321.6 L429.5 317.6Z M452.2 486.5 L613.7 492.8 L611.9 331.5 L440.2 327.7Z" fill="#b72d3a" fill-rule="evenodd"/>
</g>
<!-- hidden edge dashes + centre line -->
<path d="M494.500 429.500L643.200 434.200M494.500 429.500L443.600 495.100" stroke="#3a2a30" stroke-opacity=".7" stroke-width="1" stroke-dasharray="4 4" fill="none"/>
<path d="M546.500 305L552.300 462" stroke="#151515" stroke-width="1.500" stroke-dasharray="5.500 3" fill="none"/>
<path d="M546.500 305L547.600 336" stroke="#8c2a35" stroke-width="1.400" stroke-dasharray="5.500 3" fill="none"/>
<!-- handles -->
<g fill="#e2e2e2" stroke="#333" stroke-width="1.600">
<rect x="541.200" y="294.200" width="10.200" height="10.200"/>
<rect x="438.300" y="489.800" width="10.400" height="10.400"/>
<rect x="618.300" y="496.800" width="10.400" height="10.400"/>
<rect x="489.500" y="424.300" width="10.400" height="10.400"/>
<rect x="638" y="429" width="10.400" height="10.400"/>
</g>
<g fill="#333">
<rect x="564.800" y="428.300" width="7" height="7"/><rect x="529.300" y="495" width="7" height="7"/><rect x="468" y="455.500" width="7" height="7"/><rect x="630.800" y="461.200" width="7" height="7"/>
</g>
<!-- move-up cone -->
<path d="M544 222.200l5.700 13.300c-3.500 1.200-7.900 1.200-11.400 0z" fill="#2b2b2b"/>
<!-- rotation arrows -->
<path d="M553 258C556.500 246 569.500 246 573 258" fill="none" stroke="#858585" stroke-width="1.600"/><path d="M550.200 252.500l.6 9 6.400-4.600z" fill="#858585"/><path d="M575.800 252.500l-.6 9-6.400-4.600z" fill="#858585"/>
<path d="M458.500 274v-6c0-3 2.500-4 3.500-1.500" fill="none" stroke="#6a6a6a" stroke-width="1"/><path d="M462.500 269l.8 4" stroke="#6a6a6a" stroke-width=".8"/>
<path d="M658 463c4-2 9-1 10 1.500 1 2.500-3 4.500-8 4.500" fill="none" stroke="#333" stroke-width="1.200"/><path d="M657 469l4-2.500v4z" fill="#333"/>
</svg>
<!-- view cube -->
<svg class="abs" style="left:18px;top:28px" width="80" height="82" viewBox="18 211 80 82">
<defs><linearGradient id="vcf" x1="0" y1="0" x2="0" y2="1"><stop offset="0" stop-color="#fdfdfd"/><stop offset="1" stop-color="#e4e4e4"/></linearGradient></defs>
<polygon points="28.500,282.600 87,283 86,287.400 30,286.400" fill="#c9c9c9"/>
<polygon points="24.800,222.800 37.200,216.300 85.600,216.700 88.300,223.700" fill="#f4f4f4" stroke="#cfcfcf" stroke-width="1"/>
<polygon points="24.800,222.800 88.300,223.700 86.900,282.200 28.300,281.700" fill="url(#vcf)" stroke="#cdcdcd" stroke-width="1"/>
<text x="56.500" y="258.600" text-anchor="middle" font-family="Liberation Sans, sans-serif" font-weight="bold" font-size="13.500" fill="#a9adb4" textLength="43" lengthAdjust="spacingAndGlyphs">FRONT</text>
<text x="56" y="221.500" text-anchor="middle" font-family="Liberation Sans, sans-serif" font-weight="bold" font-size="6" fill="#b5b8bd" transform="translate(0 -2) scale(1 .5) translate(0 223)">TOP</text>
</svg>
<!-- nav buttons -->
<svg class="abs" style="left:13px;top:127px" width="36" height="206" viewBox="0 0 36 206" fill="none">
<g stroke="#9aa2ad" stroke-width="1" fill="#f8f9fa"><circle cx="18" cy="17.700" r="16.500"/><circle cx="18" cy="59.700" r="16.500"/><circle cx="18" cy="101.700" r="16.500"/><circle cx="18" cy="143.700" r="16.500"/><circle cx="18" cy="185.700" r="16.500"/></g>
<path d="M10.500 19.200L18 11.200l7.500 8h-2.300v6h-3.400v-5h-3.600v5h-3.400v-6z" stroke="#b9b9b9" stroke-width="1.200"/>
<path d="M10.800 55.800v-3.600h3.600M21.600 52.200h3.600v3.600M25.200 63.600v3.600h-3.600M14.400 67.200h-3.600v-3.600" stroke="#c3c3c3" stroke-width="1.400"/>
<path d="M11.800 101.700h12.400M18 95.500v12.400" stroke="#a9a9a9" stroke-width="1.500"/>
<path d="M11.800 143.700h12.400" stroke="#a9a9a9" stroke-width="1.500"/>
<path d="M18 177.500l6.200 2.800v6.200L18 194l-6.200-7.500v-6.200zM11.800 180.300L18 183.500l6.200-3.200M18 183.500V194" stroke="#a9a9a9" stroke-width="1.100"/>
</svg>
<!-- shape inspector -->
<div class="abs" style="left:1052px;top:12px;width:256px;height:65px;background:#fff;border-radius:3px;box-shadow:0 2px 4px rgba(70,90,130,.28)"></div>
<svg class="abs" style="left:1052px;top:12px" width="256" height="65" viewBox="0 0 256 65">
<path d="M13.500 30.500l6.500 6 6.500-6" fill="none" stroke="#2a3d54" stroke-width="2.200"/>
<text x="50" y="20" font-family="Liberation Sans, sans-serif" font-size="14.500" fill="#3b4a5e" stroke="#3b4a5e" stroke-width=".3" letter-spacing=".4">Shape</text>
<circle cx="62" cy="45" r="15" fill="#fff" stroke="#7fa9e6" stroke-width="1.600"/><circle cx="62" cy="45" r="12.200" fill="#e8192c"/>
<defs><pattern id="hs" width="5" height="5" patternUnits="userSpaceOnUse" patternTransform="rotate(45)"><rect width="5" height="5" fill="#c9c9c9"/><rect width="2.400" height="5" fill="#a8a8a8"/></pattern></defs>
<circle cx="96" cy="45" r="12" fill="url(#hs)"/>
<g transform="translate(-1.800 -.6)"><path d="M190.500 42.500h12.500v9.500c0 .8-.5 1.300-1.300 1.300h-9.900c-.8 0-1.300-.5-1.300-1.300z" fill="#4f627a"/><path d="M193.200 37.500a3.800 3.800 0 0 1 7.400-.6c.4 1 .4 2.100.4 5.300" fill="none" stroke="#4f627a" stroke-width="1.800" transform="translate(3.500 0)"/></g>
<path d="M226 47.500c-.3-2-3.700-4.200-3.700-8.200a6.800 6.800 0 0 1 13.600 0c0 4-3.400 6.200-3.700 8.200z" fill="#cdd3db" stroke="#5a6b80" stroke-width="1.300"/><path d="M226 50h6.200M226.800 52.300h4.600M227.800 54.400h2.600" stroke="#5a6b80" stroke-width="1.100"/>
</svg>
<!-- settings + snap grid -->
<div class="abs" style="left:1220px;top:613px;width:89px;height:21px;background:rgba(255,255,255,.78);border:1px solid rgba(225,232,238,.9);border-radius:2px;font-size:12.300px;color:#5e6c80;text-align:center;line-height:17px;letter-spacing:.2px;padding-left:1px">Settings</div>
<div class="abs" style="left:1177px;top:647px;font-size:12.300px;color:#3f4d62;white-space:nowrap;letter-spacing:.1px">Snap Grid</div>
<div class="abs" style="left:1239px;top:645px;width:70px;height:20px;background:rgba(255,255,255,.8);border:1px solid rgba(222,230,237,.9);border-radius:2px;font-size:12.300px;color:#66758a;line-height:18px;padding-left:7px;white-space:nowrap">1.0 mm</div>
<svg class="abs" style="left:1293px;top:652px" width="8" height="6" viewBox="0 0 8 6"><path d="M.5 5.200h7L4 .8z" fill="#333"/></svg>
</div>
<!-- ================= RIGHT SHAPES PANEL ================= -->
<div id="rightpanel" class="abs">
<!-- top tool icons (page coords via viewBox) -->
<svg class="abs" style="left:0;top:0" width="276" height="677" viewBox="1320 183 276 677">
<defs>
<pattern id="st1" width="6.400" height="6.400" patternUnits="userSpaceOnUse" patternTransform="rotate(-42)"><rect width="6.400" height="6.400" fill="#d3d7df"/><rect width="3" height="6.400" fill="#b9bec7"/></pattern>
<pattern id="st2" width="6.400" height="6.400" patternUnits="userSpaceOnUse" patternTransform="rotate(-42)"><rect width="6.400" height="6.400" fill="#c6cad3"/><rect width="3" height="6.400" fill="#adb2bc"/></pattern>
<radialGradient id="shd"><stop offset="0" stop-color="#9a9ca3" stop-opacity=".4"/><stop offset=".55" stop-color="#b5b7bd" stop-opacity=".2"/><stop offset="1" stop-color="#f7f8fa" stop-opacity="0"/></radialGradient>
<radialGradient id="sph" cx=".62" cy=".35" r=".75"><stop offset="0" stop-color="#12a7e4"/><stop offset=".55" stop-color="#0e95d1"/><stop offset="1" stop-color="#0a6f9f"/></radialGradient>
<radialGradient id="pnk" cx=".6" cy=".45" r=".8"><stop offset="0" stop-color="#ee1aa0"/><stop offset=".6" stop-color="#d9158c"/><stop offset="1" stop-color="#b30f72"/></radialGradient>
<linearGradient id="org" x1="0" x2="1"><stop offset="0" stop-color="#c96812"/><stop offset=".3" stop-color="#e27a1b"/><stop offset=".8" stop-color="#e47d1d"/><stop offset="1" stop-color="#cc6a13"/></linearGradient>
<linearGradient id="pur" x1="0" x2="1"><stop offset="0" stop-color="#5f2d7c"/><stop offset=".45" stop-color="#7d3f9f"/><stop offset="1" stop-color="#8745a8"/></linearGradient>
<linearGradient id="wht" x1="0" x2="1"><stop offset="0" stop-color="#bdbdbd"/><stop offset=".4" stop-color="#e4e4e4"/><stop offset="1" stop-color="#c6c6c6"/></linearGradient>
<linearGradient id="cyl" x1="0" x2="1"><stop offset="0" stop-color="#8e949d" stop-opacity=".55"/><stop offset=".35" stop-color="#c9cdd5" stop-opacity=".1"/><stop offset="1" stop-color="#d9dce3" stop-opacity=".25"/></linearGradient>
</defs>
<!-- workplane icon -->
<g stroke="#1a8fc7" fill="none">
<polygon points="1345.500,201 1384.700,198.100 1384.700,239.400 1347.500,236.500" stroke-width="1.700" fill="#eef4f9"/>
<path d="M1351.100 200.600l1.700 36.300M1356.700 200.200l1.400 37.100M1362.300 199.800l1.100 37.900M1367.900 199.300l.8 38.800M1373.500 198.900l.5 39.700M1379.100 198.500l.2 40.500" stroke-width="1.100"/>
<path d="M1345.800 206.100l38.900-2.100M1346 211.200l38.700-1.300M1346.300 216.200l38.400-.4M1346.600 221.300l38.100.5M1346.900 226.400l37.800 1.400M1347.200 231.400l37.500 2.200" stroke-width="1.100"/>
</g>
<!-- ruler icon -->
<g stroke="#1a8fc7" fill="none" stroke-width="1.700">
<polygon points="1437.700,201 1447.500,201 1449.800,227.600 1478.800,229.800 1478.300,240.200 1440.700,237.400" fill="#eef4f9"/>
<path d="M1443.500 207.300h4.400M1444 212.600h3.100M1444.500 217.800h4.200M1445 223h3M1446 228.300h4.300M1453.800 229.300v3.400M1458.900 229.700v4.700M1464.200 230.100v3.300M1469.400 230.500v4.800M1474.500 230.900v3.200" stroke-width="1.100"/>
</g>
<!-- notes icon -->
<g stroke="#1a8fc7" fill="none">
<path d="M1538 199.300h24c2.600 0 4 1.400 4 4v25c0 2.600-1.400 4-4 4h-7l-6.500 7.600-6.500-7.600h-4c-2.600 0-4-1.400-4-4v-25c0-2.600 1.400-4 4-4z" stroke-width="2" stroke-linejoin="round" fill="#f0f4f9"/>
<path d="M1542 209.500h14M1542 213.500h14.500M1542 217.500h14M1542 221.500h10" stroke-width="1.100"/>
</g>
<!-- dropdown + search -->
<rect x="1330.500" y="260.500" width="206.500" height="45" rx="2.500" fill="#f3f4f7" stroke="#dfe3ea"/>
<rect x="1540.500" y="260.500" width="44.500" height="45" rx="2.500" fill="#f3f4f7" stroke="#dfe3ea"/>
<text x="1341.800" y="288" font-family="Liberation Sans, sans-serif" font-size="14.500" fill="#4b5b70" letter-spacing=".25">Basic Shapes</text>
<path d="M1519.600 281.200h7.400l-3.700-4.800zM1519.600 285.600h7.400l-3.700 4.800z" fill="#1b1b1b"/>
<circle cx="1560.300" cy="281.300" r="8.300" fill="none" stroke="#111" stroke-width="2.200"/><path d="M1566 287.600l7 7" stroke="#111" stroke-width="2.400" stroke-linecap="round"/>
<!-- cards -->
<g fill="#f7f8fa">
<rect x="1330" y="317" width="82" height="92" rx="4"/><rect x="1417" y="317" width="82" height="92" rx="4"/><rect x="1504" y="317" width="82" height="92" rx="4"/>
<rect x="1330" y="416" width="82" height="92" rx="4"/><rect x="1417" y="416" width="82" height="92" rx="4"/><rect x="1504" y="416" width="82" height="92" rx="4"/>
<rect x="1330" y="520" width="82" height="92" rx="4"/><rect x="1417" y="520" width="82" height="92" rx="4"/><rect x="1504" y="520" width="82" height="92" rx="4"/>
<rect x="1330" y="624" width="82" height="92" rx="4"/><rect x="1417" y="624" width="82" height="92" rx="4"/><rect x="1504" y="624" width="82" height="92" rx="4"/>
<rect x="1330" y="728" width="82" height="92" rx="4"/><rect x="1417" y="728" width="82" height="92" rx="4"/><rect x="1504" y="728" width="82" height="92" rx="4"/>
<rect x="1330" y="832" width="82" height="92" rx="4"/><rect x="1417" y="832" width="82" height="92" rx="4"/><rect x="1504" y="832" width="82" height="92" rx="4"/>
</g>
<!-- soft shadows behind thumbnails -->
<g fill="url(#shd)">
<circle cx="1371" cy="462" r="30" opacity=".55"/><circle cx="1458" cy="462" r="30" opacity=".7"/><circle cx="1545" cy="462" r="30" opacity=".45"/>
<circle cx="1371" cy="563" r="33"/><circle cx="1458" cy="563" r="33"/><circle cx="1545" cy="563" r="33"/>
<circle cx="1371" cy="668" r="33"/><circle cx="1458" cy="672" r="33"/><circle cx="1545" cy="672" r="33"/>
<circle cx="1371" cy="776" r="33"/><circle cx="1458" cy="776" r="33"/><circle cx="1545" cy="776" r="33"/>
<circle cx="1371" cy="880" r="33"/><circle cx="1458" cy="880" r="33"/><circle cx="1545" cy="880" r="33"/>
</g>
<!-- 1 box hole -->
<g stroke="#878c95" stroke-width=".9" stroke-linejoin="round">
<polygon points="1344.200,351.900 1386.600,356.200 1384,393.400 1346.800,385.600" fill="url(#st2)"/>
<polygon points="1386.600,356.200 1395.200,340.600 1393.500,372.600 1384,393.400" fill="url(#st1)"/>
<polygon points="1359.800,335.100 1395.200,340.600 1386.600,356.200 1344.200,351.900" fill="url(#st1)"/>
</g>
<!-- 2 cylinder hole -->
<g stroke="#878c95" stroke-width=".9">
<path d="M1437.400 346.700v33.700c0 5.300 9.100 9.600 20.400 9.600s20.400-4.300 20.400-9.600v-33.700z" fill="url(#st2)"/>
<path d="M1437.400 346.700v33.700c0 5.300 9.100 9.600 20.400 9.600s20.400-4.300 20.400-9.600v-33.700z" fill="url(#cyl)" stroke="none"/>
<ellipse cx="1457.800" cy="346.700" rx="20.400" ry="9.900" fill="url(#st1)"/>
</g>
<!-- 3 red box -->
<g stroke="#7d0f18" stroke-width=".8" stroke-linejoin="round">
<polygon points="1518,351.900 1560.700,356.200 1558.300,393.700 1520.600,385.600" fill="#ad1623"/>
<polygon points="1560.700,356.200 1569,340.100 1567.600,372.600 1558.300,393.700" fill="#bb1926"/>
<polygon points="1534.100,335.100 1569,340.100 1560.700,356.200 1518,351.900" fill="#cf1b2b"/>
</g>
<!-- 4 orange cylinder -->
<g stroke="#a9560c" stroke-width=".7">
<path d="M1350.400 446.500v31.500c0 5.700 9.100 10.300 20.300 10.300s20.300-4.600 20.300-10.300v-31.500z" fill="url(#org)"/>
<ellipse cx="1370.700" cy="446.500" rx="20.300" ry="10.300" fill="#e27c1f"/>
</g>
<!-- 5 sphere -->
<circle cx="1457.900" cy="461.600" r="20" fill="url(#sph)"/>
<!-- 6 scribble -->
<g stroke-linecap="round" stroke-linejoin="round" fill="none">
<polygon points="1545,468 1560.500,455 1561,484 1556,489.500 1549,486 1544.500,478" fill="#7da5c4" stroke="#7da5c4" stroke-width="3"/>
<g stroke="#7da5c4" stroke-width="5"><path d="M1527.500 462C1526.500 455 1533 450 1539 451.500C1544 453 1544 462 1547 465C1550 467 1551 452 1555 449.500C1558 448 1560 450 1560.500 453" transform="translate(0 3)"/><path d="M1527.500 462C1526.500 455 1533 450 1539 451.500C1544 453 1544 462 1547 465C1550 467 1551 452 1555 449.500C1558 448 1560 450 1560.500 453" transform="translate(0 6)"/><path d="M1527.500 462C1526.500 455 1533 450 1539 451.500C1544 453 1544 462 1547 465C1550 467 1551 452 1555 449.500C1558 448 1560 450 1560.500 453" transform="translate(0 9)"/><path d="M1527.500 462C1526.500 455 1533 450 1539 451.500C1544 453 1544 462 1547 465C1550 467 1551 452 1555 449.500C1558 448 1560 450 1560.500 453" transform="translate(0 12)"/><path d="M1527.500 462C1526.500 455 1533 450 1539 451.500C1544 453 1544 462 1547 465C1550 467 1551 452 1555 449.500C1558 448 1560 450 1560.500 453" transform="translate(0 15)"/></g>
<g stroke="#8fb7d4" stroke-width="5"><path d="M1527.500 462C1526.500 455 1533 450 1539 451.500C1544 453 1544 462 1547 465C1550 467 1551 452 1555 449.500C1558 448 1560 450 1560.500 453" transform="translate(0 1.5)"/></g>
<path d="M1527.500 462C1526.500 455 1533 450 1539 451.500C1544 453 1544 462 1547 465C1550 467 1551 452 1555 449.500C1558 448 1560 450 1560.500 453" stroke="#a9cfe8" stroke-width="5"/>
<path d="M1527.500 462C1526.500 455 1533 450 1539 451.500C1544 453 1544 462 1547 465C1550 467 1551 452 1555 449.500C1558 448 1560 450 1560.500 453" transform="translate(0 -1)" stroke="#c0def1" stroke-width="1.300"/>
</g>
<!-- 7 green roof -->
<g stroke="#23712d" stroke-width=".6" stroke-linejoin="round">
<polygon points="1376.500,548.600 1359.800,560.900 1346.200,580.300 1365.200,567.300" fill="#256e2d"/>
<polygon points="1365.200,567.300 1384.300,588.600 1346.200,580.300" fill="#2f8738"/>
<polygon points="1376.500,548.600 1393.900,567.300 1384.300,588.600 1365.200,567.300" fill="#43b04c"/>
</g>
<!-- 8 purple cone -->
<path d="M1457.800 548.300l19.200 32c1.500 5.800-7.200 12.500-19.200 12.500s-20.300-6.700-18.300-12.500z" fill="url(#pur)" stroke="#552570" stroke-width=".6"/>
<!-- 9 round roof -->
<g stroke="#3d7e8b" stroke-width=".7" stroke-linejoin="round">
<path d="M1520 579L1537 552C1545 545 1560 547.500 1566 557.500C1568 561.500 1568 564.500 1567.600 566L1558 588C1559 579 1555 570 1547 566C1537 561 1524 566 1520 579Z" fill="#69c4d3"/>
<path d="M1520 579C1524 566 1537 561 1547 566C1555 570 1559 579 1558 588Z" fill="#529aa6"/>
<path d="M1545.500 548.200L1531 564M1553 548L1538.500 563.600" stroke="#5bb3c2" fill="none" stroke-width=".7"/>
</g>
<!-- 10 TEXT -->
<g font-family="Liberation Sans, sans-serif" font-weight="bold" font-style="italic" font-size="19.500" transform="translate(1345.500 671.500) rotate(9.500) skewX(-8) scale(1 1.080)">
<text x="0.800" y="4.600" fill="#7f0f18" stroke="#7f0f18" stroke-width="2.600" stroke-linejoin="round" textLength="49" lengthAdjust="spacingAndGlyphs">TEXT</text>
<text x="0.400" y="2.400" fill="#a8141f" stroke="#a8141f" stroke-width="2" stroke-linejoin="round" textLength="49" lengthAdjust="spacingAndGlyphs">TEXT</text>
<text x="0" y="0" fill="#d41c2a" stroke="#d41c2a" stroke-width="1.200" stroke-linejoin="round" textLength="49" lengthAdjust="spacingAndGlyphs">TEXT</text>
</g>
<!-- 11 blue polygon prism -->
<g stroke="#1b2750" stroke-width=".8" stroke-linejoin="round">
<polygon points="1431.300,658.800 1471.400,665.300 1470.400,700.400 1434.300,692.700" fill="#2b3d7d"/>
<polygon points="1471.400,665.300 1480.200,678.700 1470.400,700.400" fill="#34499a"/>
</g>
<!-- 12 yellow pyramid -->
<g stroke="#a68c08" stroke-width=".8" stroke-linejoin="round">
<polygon points="1545.100,652.800 1520.900,692.200 1558.100,700.400" fill="#e6c416"/>
<polygon points="1545.100,652.800 1558.100,700.400 1567,678.700" fill="#f6d81f"/>
</g>
<!-- 13 pink half sphere -->
<path d="M1352 783.500c-.5-11.500 7.500-20.600 18.700-20.600s19.300 9.100 18.800 20.600c-.3 5.300-8.400 9.500-18.800 9.500s-18.400-4.200-18.700-9.500z" fill="url(#pnk)"/>
<!-- 14 hexagonal prism -->
<g stroke="#1b2750" stroke-width=".8" stroke-linejoin="round">
<polygon points="1437.900,752.300 1439.500,762.100 1442.400,796.300 1462.300,802.500 1462.800,765.700" fill="#2b3f85"/>
<polygon points="1462.800,765.700 1462.300,802.500 1477.400,793 1479.600,758.800" fill="#34499a"/>
<polygon points="1437.900,752.300 1453.800,746.600 1473.700,749 1479.600,758.800 1462.800,765.700 1439.500,762.100" fill="#324790"/>
</g>
<!-- 15 paraboloid -->
<path d="M1544.700 756.400c7.500 0 15.500 15 19.100 31.500 1.200 6.500-7.600 12.500-19.100 12.500s-20.300-6-19.100-12.500c3.600-16.500 11.600-31.500 19.100-31.500z" fill="url(#wht)" stroke="#8f8f8f" stroke-width=".9"/>
<!-- scrollbar -->
<rect x="1583.200" y="317" width="7.600" height="358.500" rx="3.800" fill="#bcbcbc"/>
</svg>
</div>
<!-- panel collapse tab -->
<div class="abs" style="left:1310px;top:498px;width:16px;height:47px;background:#f3f4f7;border:1px solid #d3d9e2;border-right:none"></div>
<svg class="abs" style="left:1313px;top:510px" width="10" height="24" viewBox="0 0 10 24"><path d="M2.800 1.500L8.300 12 2.800 22.500" fill="none" stroke="#111" stroke-width="1.600"/></svg>
<!-- ================= WINDOWS TASKBAR ================= -->
<div id="taskbar" class="abs"></div>
<div class="abs" style="left:242px;top:860px;width:48px;height:40px;background:#4a5b64"></div>
<div class="abs" style="left:148px;top:898px;width:40px;height:2px;background:#76b9ed"></div>
<div class="abs" style="left:197px;top:898px;width:40px;height:2px;background:#76b9ed"></div>
<div class="abs" style="left:242px;top:898px;width:48px;height:2px;background:#76b9ed"></div>
<svg class="abs" style="left:0;top:860px" width="300" height="40" viewBox="0 860 300 40">
<!-- start -->
<path d="M11.700 874l7-1v6.600h-7zM19.600 872.900l9-1.400v8.100h-9zM11.700 880.500h7v6.600l-7-1zM19.600 880.500h9v8.100l-9-1.400z" fill="#fff"/>
<!-- search -->
<circle cx="69.500" cy="878.300" r="7.800" fill="none" stroke="#fff" stroke-width="2"/><path d="M63.800 884l-6.300 6.300" stroke="#fff" stroke-width="2.200" stroke-linecap="round"/>
<!-- explorer -->
<path d="M108.300 872.500c0-.8.500-1.300 1.300-1.300h6.200l1.800 2h11c.8 0 1.300.5 1.300 1.300v13.300h-21.600z" fill="#e9a921"/><path d="M108.300 875.200h21.600v12.600c0 .6-.4 1-1 1h-19.600c-.6 0-1-.4-1-1z" fill="#fbd768"/><path d="M112.500 882.500h13.200v6.300h-13.200z" fill="#2f8de0"/><path d="M115.200 885h7.800v3.800h-7.800z" fill="#fbd768"/>
<!-- chrome canary -->
<circle cx="167.900" cy="879.800" r="11.800" fill="#f7b916"/><path d="M167.900 879.800l-10.200-5.900a11.800 11.800 0 0 1 20.400 0z" fill="#fbc92c"/><path d="M167.900 879.800l10.200-5.900a11.800 11.800 0 0 1-10.200 17.700z" fill="#f5a90f"/><circle cx="167.900" cy="879.800" r="5.600" fill="#fff"/><circle cx="167.900" cy="879.800" r="4.400" fill="#f8bd1d"/>
<!-- roblox studio -->
<g transform="rotate(14 216.700 879.400)"><rect x="207.500" y="870.200" width="18.400" height="18.400" fill="#dfe3e8"/><path d="M207.500 870.200h18.400l-18.400 18.400z" fill="#c2c8cf" opacity=".6"/><rect x="214.300" y="877" width="4.800" height="4.800" fill="#1f2d36"/></g>
<!-- snipping tool -->
<path d="M266 869.500c6-1.500 11 3 10 9s-6 8-10 6" fill="none" stroke="#d43a1a" stroke-width="2.600"/><path d="M263.500 884.500c-4-2-5.500-7-3.500-11.500" fill="none" stroke="#d43a1a" stroke-width="2.200"/>
<path d="M266.500 869.500l.8 15" stroke="#e6e6e6" stroke-width="2.200"/><path d="M272.500 876.500l-7 8.500" stroke="#bdbdbd" stroke-width="2"/>
<circle cx="261.500" cy="886.600" r="2.700" fill="none" stroke="#1e7fd6" stroke-width="1.900"/><circle cx="269.800" cy="888.600" r="2.700" fill="none" stroke="#1e7fd6" stroke-width="1.900"/>
</svg>
<!-- system tray -->
<svg class="abs" style="left:1350px;top:860px" width="246" height="40" viewBox="1350 860 246 40">
<path d="M1357.200 883l5.700-5.700 5.700 5.700" fill="none" stroke="#fff" stroke-width="1.300"/>
<path d="M1379.500 873.700l15.500-1.200v12.800l-15.500-1.200z" fill="none" stroke="#fff" stroke-width="1.200"/><path d="M1383 886.300l8 .6" stroke="#fff" stroke-width="1.200"/><path d="M1384 877.500c1.500-2 4.500-2 6 0M1390.200 880.300c-1.500 2-4.500 2-6 0" fill="none" stroke="#fff" stroke-width="1"/><path d="M1389.300 875.800l1 2-2.200.2zM1384.700 882l-1-2 2.200-.2z" fill="#fff"/>
<circle cx="1391.300" cy="884.600" r="3.700" fill="#ff9808"/>
<g fill="none" stroke="#fff" stroke-width="1.100"><path d="M1406.800 887.300a11.500 11.500 0 0 1 11.500-11.500" opacity=".95"/><path d="M1410 887.300a8.300 8.300 0 0 1 8.300-8.300"/><path d="M1413.200 887.300a5.100 5.100 0 0 1 5.100-5.100"/></g><circle cx="1417" cy="886.200" r="1.500" fill="#fff"/>
<path d="M1427.200 877.300h3l4.200-4v14l-4.200-4h-3z" fill="none" stroke="#fff" stroke-width="1.100" stroke-linejoin="round"/><path d="M1436.500 877.500l4.500 4.500M1441 877.500l-4.500 4.500" stroke="#fff" stroke-width="1.100"/>
<g fill="none" stroke="#fff" stroke-width="1.200"><path d="M1459.500 886l1.800-5 6.200-8.300c1-1 3 .3 2.300 1.700l-5.500 8.500z"/><path d="M1459.500 881.500c-3 0-4.500 1.500-4.500 3.500s1.500 2.500 3.300 2M1468.500 877c1.700.3 2.500 1.500 2.200 2.800-.3 1.200-1.500 2-3.500 2.300"/></g>
<text x="1511" y="874.800" text-anchor="middle" font-family="Liberation Sans, sans-serif" font-size="12" fill="#fff" textLength="42" lengthAdjust="spacingAndGlyphs">8:32 PM</text>
<text x="1511" y="892.800" text-anchor="middle" font-family="Liberation Sans, sans-serif" font-size="12" fill="#fff" textLength="51.500" lengthAdjust="spacingAndGlyphs">4/16/2024</text>
<path d="M1555.500 872h15.500v11h-10.500l-3 3v-3h-2z" fill="#fff"/><path d="M1558 875.200h10.500M1558 877.600h10.500M1558 880h10.500" stroke="#1d2b42" stroke-width=".9"/>
<circle cx="1570.500" cy="887.300" r="8.600" fill="#343a47" stroke="#59606c" stroke-width="1"/>
<text x="1570.400" y="891.300" text-anchor="middle" font-family="Liberation Sans, sans-serif" font-size="11" font-weight="bold" fill="#fff" letter-spacing="-.5">21</text>
<path d="M1591.500 860v40" stroke="#56627a" stroke-width="1"/>
</svg>
<!-- activate windows watermark -->
<div class="abs" style="left:1291px;top:775.500px;font-size:20.250px;color:rgba(135,135,135,.58);white-space:nowrap;letter-spacing:-.15px">Activate Windows</div>
<div class="abs" style="left:1291px;top:800.500px;font-size:15.200px;color:rgba(135,135,135,.58);white-space:nowrap;letter-spacing:-.1px">Go to Settings to activate Windows.</div>

</body>
</html>
